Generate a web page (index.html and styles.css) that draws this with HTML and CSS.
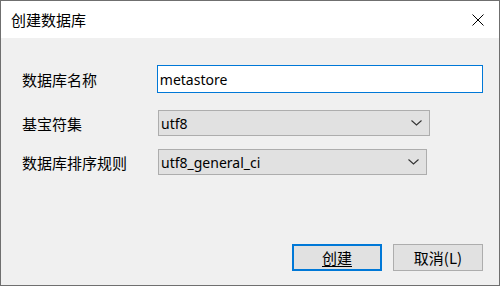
FILE: index.html
```html
<!DOCTYPE html>
<html lang="zh-CN">
<head>
    <meta charset="UTF-8">
    <title>创建数据库</title>
    <link rel="stylesheet" href="styles.css">
</head>
<body>
    <div class="window">
        <div class="titlebar">
            <span class="title">创建数据库</span>
            <button class="close-btn" aria-label="关闭">
                <svg width="12" height="12" viewBox="0 0 12 12">
                    <path d="M0.5 0.5 L11.5 11.5 M11.5 0.5 L0.5 11.5" stroke="#000" stroke-width="1" fill="none"/>
                </svg>
            </button>
        </div>
        <div class="content">
            <div class="form">
                <div class="row row-name">
                    <label class="label">数据库名称</label>
                    <input type="text" class="field text-field" value="metastore">
                </div>
                <div class="row row-charset">
                    <label class="label">基宝符集</label>
                    <div class="field combo combo-charset">
                        <span>utf8</span>
                        <svg class="arrow" width="11" height="6" viewBox="0 0 11 6">
                            <polyline points="0.5,0.5 5.5,5 10.5,0.5" stroke="#333" stroke-width="1.1" fill="none"/>
                        </svg>
                    </div>
                </div>
                <div class="row row-collation">
                    <label class="label">数据库排序规则</label>
                    <div class="field combo combo-collation">
                        <span>utf8_general_ci</span>
                        <svg class="arrow" width="11" height="6" viewBox="0 0 11 6">
                            <polyline points="0.5,0.5 5.5,5 10.5,0.5" stroke="#333" stroke-width="1.1" fill="none"/>
                        </svg>
                    </div>
                </div>
            </div>
            <div class="footer">
                <button class="btn btn-default"><u>创建</u></button>
                <button class="btn">取消(L)</button>
            </div>
        </div>
    </div>
</body>
</html>
```

FILE: styles.css
```css
* {
    box-sizing: border-box;
}

body {
    margin: 0;
    font-family: 'Segoe UI', 'Noto Sans', 'Noto Sans CJK SC', sans-serif;
    font-size: 15px;
    color: #000;
}

.window {
    width: 500px;
    height: 286px;
    border: 1px solid #6f6f6f;
    display: flex;
    flex-direction: column;
    background-color: #f0f0f0;
}

.titlebar {
    height: 37px;
    background-color: #fff;
    display: flex;
    align-items: center;
    padding-left: 10px;
}

.title {
    flex: 1;
}

.close-btn {
    width: 42px;
    height: 37px;
    border: none;
    background: none;
    padding: 0;
    display: flex;
    justify-content: center;
    align-items: center;
}

.content {
    flex: 1;
    display: flex;
    flex-direction: column;
    padding: 27px 16px 14px 21px;
}

.row {
    display: flex;
    align-items: center;
}

.label {
    width: 136px;
    font-family: 'Noto Sans CJK SC', sans-serif;
}

.row-charset {
    margin-top: 17px;
}

.row-collation {
    margin-top: 13px;
}

.field {
    font-family: 'Segoe UI', 'Noto Sans', 'Noto Sans CJK SC', sans-serif;
    font-size: 14px;
    color: #000;
}

.text-field {
    width: 329px;
    height: 28px;
    border: 1px solid #0078d7;
    background-color: #fff;
    padding: 0 0 0 2px;
    outline: none;
}

.combo {
    height: 26px;
    border: 1px solid #adadad;
    background-color: #e1e1e1;
    display: flex;
    align-items: center;
    justify-content: space-between;
    padding: 0 7px 0 2px;
}

.combo-charset {
    width: 272px;
}

.combo-collation {
    width: 269px;
}

.footer {
    margin-top: auto;
    display: flex;
    justify-content: flex-end;
    gap: 11px;
}

.btn {
    width: 90px;
    height: 27px;
    border: 1px solid #adadad;
    background-color: #e1e1e1;
    font-family: 'Noto Sans CJK SC', sans-serif;
    font-size: 15px;
    color: #000;
    padding: 0;
}

.btn-default {
    border: 2px solid #0078d7;
}

.btn u {
    text-underline-offset: 2px;
}
```
